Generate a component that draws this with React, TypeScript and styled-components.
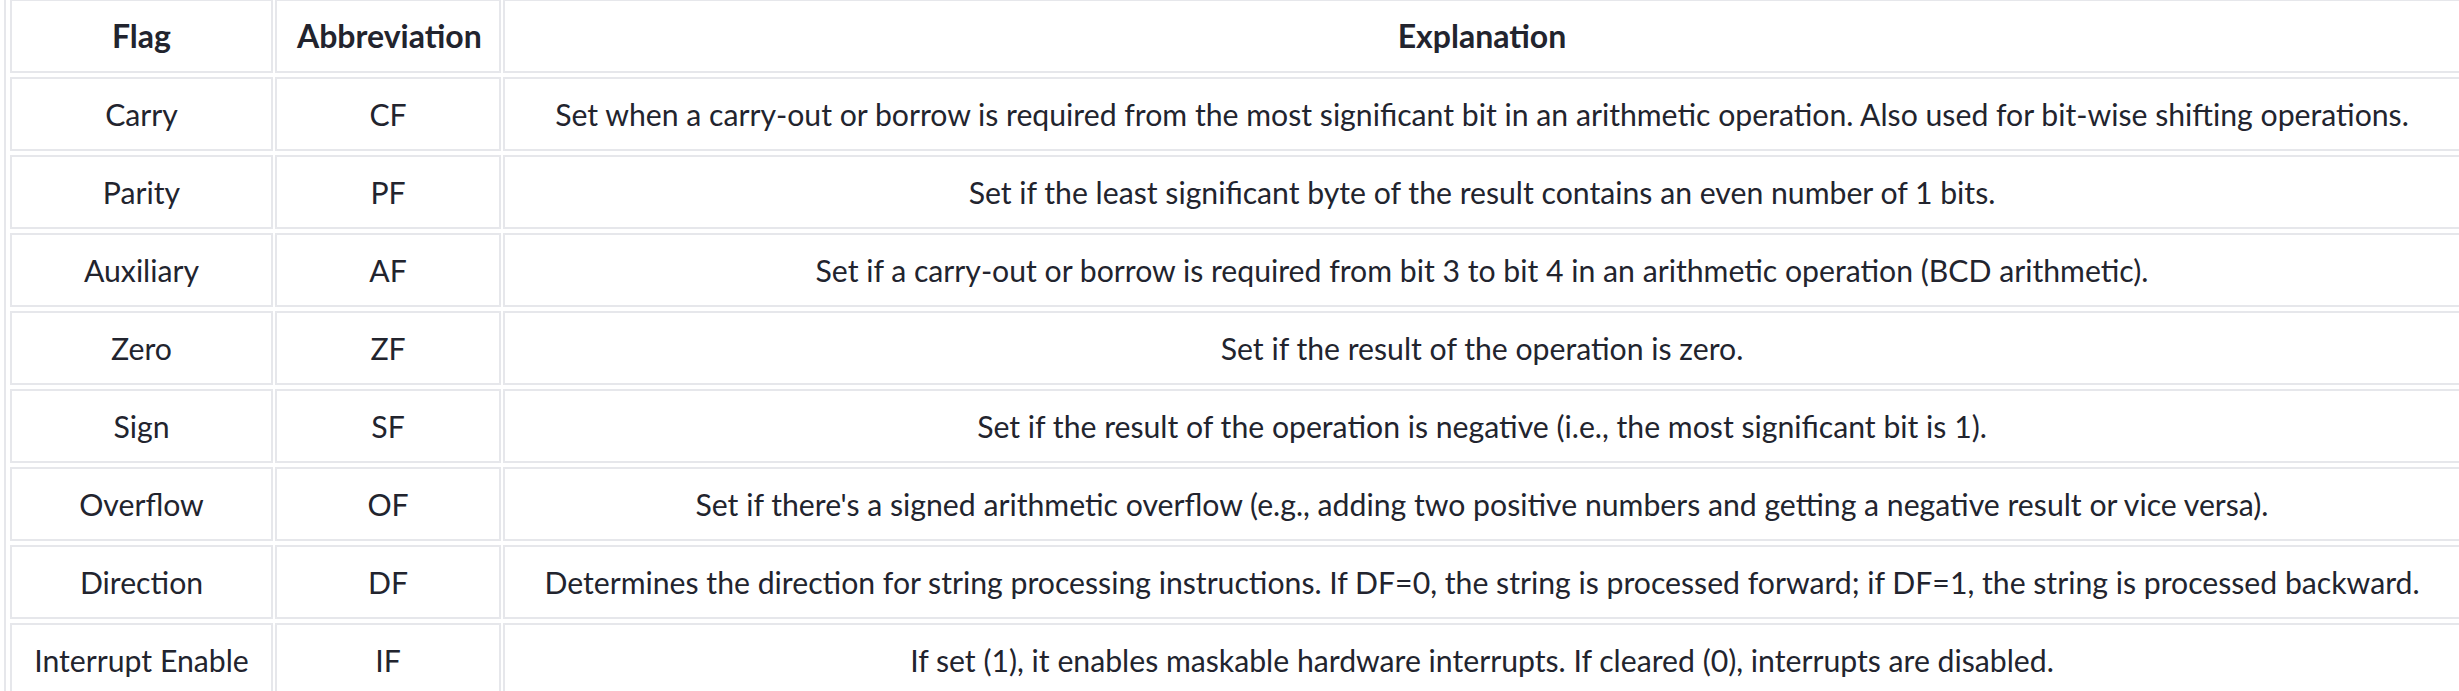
import styled, { createGlobalStyle, css } from "styled-components";

const GlobalStyle = createGlobalStyle`
  html, body {
    margin: 0;
    padding: 0;
    background: #ffffff;
    overflow: hidden;
  }
`;

const line = "#e6e7eb";

const Page = styled.div`
  margin-top: -9px;
  padding-left: 4px;
`;

const Table = styled.table`
  width: 2463px;
  table-layout: fixed;
  border-collapse: separate;
  border-spacing: 2px 4px;
  border: 2px solid ${line};
  padding: 2px;
  font-family: Lato, "Noto Sans", sans-serif;
  font-size: 30.2px;
  color: #22242e;
`;

const Col = styled.col<{ $width?: number }>`
  width: ${(p) => (p.$width ? `${p.$width}px` : "auto")};
`;

const cellBase = css`
  box-sizing: border-box;
  border: 2px solid ${line};
  padding: 11px 20px;
  line-height: 48px;
  text-align: center;
  white-space: nowrap;
`;

const HeadCell = styled.th`
  ${cellBase}
  font-size: 32px;
  font-weight: 700;
`;

const Cell = styled.td`
  ${cellBase}
  font-weight: 400;
`;

const flags = [
  {
    name: "Carry",
    abbr: "CF",
    text: "Set when a carry-out or borrow is required from the most significant bit in an arithmetic operation. Also used for bit-wise shifting operations.",
  },
  {
    name: "Parity",
    abbr: "PF",
    text: "Set if the least significant byte of the result contains an even number of 1 bits.",
  },
  {
    name: "Auxiliary",
    abbr: "AF",
    text: "Set if a carry-out or borrow is required from bit 3 to bit 4 in an arithmetic operation (BCD arithmetic).",
  },
  { name: "Zero", abbr: "ZF", text: "Set if the result of the operation is zero." },
  {
    name: "Sign",
    abbr: "SF",
    text: "Set if the result of the operation is negative (i.e., the most significant bit is 1).",
  },
  {
    name: "Overflow",
    abbr: "OF",
    text: "Set if there's a signed arithmetic overflow (e.g., adding two positive numbers and getting a negative result or vice versa).",
  },
  {
    name: "Direction",
    abbr: "DF",
    text: "Determines the direction for string processing instructions. If DF=0, the string is processed forward; if DF=1, the string is processed backward.",
  },
  {
    name: "Interrupt Enable",
    abbr: "IF",
    text: "If set (1), it enables maskable hardware interrupts. If cleared (0), interrupts are disabled.",
  },
];

const App = () => {
  return (
    <>
      <GlobalStyle />
      <Page>
        <Table>
          <colgroup>
            <Col $width={263} />
            <Col $width={226} />
            <Col />
          </colgroup>
          <thead>
            <tr>
              <HeadCell>Flag</HeadCell>
              <HeadCell>Abbreviation</HeadCell>
              <HeadCell>Explanation</HeadCell>
            </tr>
          </thead>
          <tbody>
            {flags.map(({ name, abbr, text }) => (
              <tr key={abbr}>
                <Cell>{name}</Cell>
                <Cell>{abbr}</Cell>
                <Cell>{text}</Cell>
              </tr>
            ))}
          </tbody>
        </Table>
      </Page>
    </>
  );
};

export default App;
